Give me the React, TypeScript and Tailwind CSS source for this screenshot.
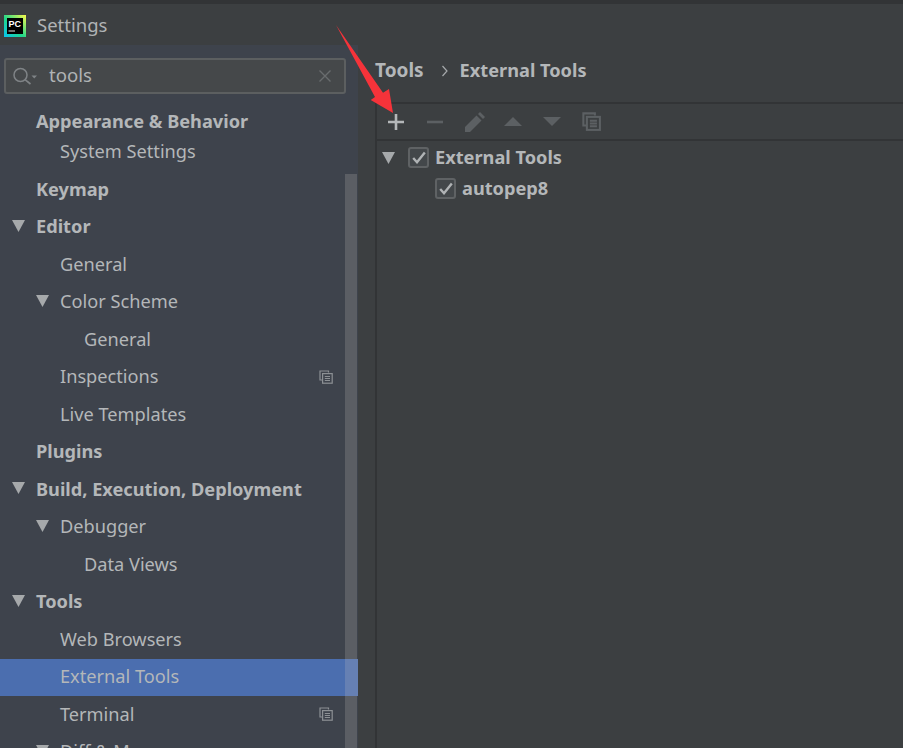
import React from "react";

const font = { fontFamily: '"Noto Sans", "Open Sans", sans-serif' };

function Tri() {
  return (
    <svg width="13" height="12" viewBox="0 0 13 12" className="block">
      <path d="M0 0H13L6.5 12Z" fill="#a6a9ab" />
    </svg>
  );
}

function CopyIcon({ size = 14, color = "#8c9094", sw = 1.2 }: { size?: number; color?: string; sw?: number }) {
  return (
    <svg width={size} height={size} viewBox="0 0 14 14" fill="none" stroke={color} strokeWidth={sw} className="block">
      <path d="M9.5 2.6V1H1v9h2" />
      <rect x="3.6" y="3.6" width="9.6" height="9.6" />
      <path d="M5.8 6.5h5.2M5.8 8.5h5.2M5.8 10.5h5.2" />
    </svg>
  );
}

function Check() {
  return (
    <span className="flex h-[21px] w-[21px] shrink-0 items-center justify-center rounded-[3px] border-2 border-[#5f6264] bg-[#43474a]">
      <svg width="14" height="13" viewBox="0 0 14 13" fill="none">
        <path d="M1.2 7l3.8 4.2L12.8 1.4" stroke="#b0b3b5" strokeWidth="2.4" />
      </svg>
    </span>
  );
}

type Row = { label: string; indent: number; bold?: boolean; arrow?: boolean; copy?: boolean; selected?: boolean; first?: boolean };

const rows: Row[] = [
  { label: "Appearance & Behavior", indent: 36, bold: true, first: true },
  { label: "System Settings", indent: 60 },
  { label: "Keymap", indent: 36, bold: true },
  { label: "Editor", indent: 36, bold: true, arrow: true },
  { label: "General", indent: 60 },
  { label: "Color Scheme", indent: 60, arrow: true },
  { label: "General", indent: 84 },
  { label: "Inspections", indent: 60, copy: true },
  { label: "Live Templates", indent: 60 },
  { label: "Plugins", indent: 36, bold: true },
  { label: "Build, Execution, Deployment", indent: 36, bold: true, arrow: true },
  { label: "Debugger", indent: 60, arrow: true },
  { label: "Data Views", indent: 84 },
  { label: "Tools", indent: 36, bold: true, arrow: true },
  { label: "Web Browsers", indent: 60 },
  { label: "External Tools", indent: 60, selected: true },
  { label: "Terminal", indent: 60, copy: true },
  { label: "Diff & Merge", indent: 60, arrow: true },
];

function TreeRow({ r }: { r: Row }) {
  return (
    <div
      className={`relative flex shrink-0 items-center ${r.first ? "h-[30.5px] pt-[6px]" : "h-[37.5px] pb-[2px]"} ${r.selected ? "bg-[#4b6eaf]" : ""} ${r.bold ? "font-bold" : ""}`}
      style={{ paddingLeft: r.indent }}
    >
      {r.arrow && (
        <span className="absolute top-[11px]" style={{ left: r.indent - 24 }}>
          <Tri />
        </span>
      )}
      <span className="whitespace-nowrap text-[18.2px] leading-none text-[#b4b7b9]">{r.label}</span>
      {r.copy && (
        <span className="absolute left-[319px] top-[11px]">
          <CopyIcon />
        </span>
      )}
    </div>
  );
}

export default function App() {
  return (
    <div className="relative flex h-[748px] w-[903px] flex-col overflow-hidden bg-[#3c3f41]" style={font}>
      <div className="h-[4px] shrink-0 bg-[#323436]" />
      <div className="flex h-[41px] shrink-0 items-center gap-[11px] bg-[#3c3f41] pl-[4px]">
        <svg width="22" height="22" viewBox="0 0 22 22" className="mt-[3px] block">
          <defs>
            <linearGradient id="pc" x1="0" y1="22" x2="22" y2="0" gradientUnits="userSpaceOnUse">
              <stop offset="0" stopColor="#07c3f2" />
              <stop offset="0.45" stopColor="#21d789" />
              <stop offset="1" stopColor="#fcf84a" />
            </linearGradient>
          </defs>
          <rect width="22" height="22" fill="url(#pc)" />
          <rect x="3" y="3" width="16" height="16" fill="#000" />
          <text x="4.5" y="11.5" fontSize="9" fontWeight="700" fill="#fff" fontFamily="Liberation Sans">PC</text>
          <rect x="4.5" y="15.5" width="6.5" height="1" fill="#ddd" />
        </svg>
        <span className="mt-[1px] text-[18.5px] leading-none text-[#b0b3b5]">Settings</span>
      </div>
      <div className="flex min-h-0 flex-1">
        <aside className="relative flex w-[358px] shrink-0 flex-col overflow-hidden bg-[#3e434c]">
          <div className="pb-[9px] pl-[4px] pt-[13px]">
            <div className="flex h-[36px] w-[342px] items-center rounded-[3px] border-2 border-[#5c5f60] bg-[#45484a] pl-[7px] pr-[13px]">
              <svg width="26" height="20" viewBox="0 0 26 20" fill="none" className="shrink-0">
                <circle cx="7.5" cy="9" r="6.5" stroke="#7f8386" strokeWidth="1.5" />
                <path d="M12.3 13.8L17.5 18" stroke="#7f8386" strokeWidth="1.7" />
                <path d="M18.5 9.5h5.5l-2.75 3z" fill="#7f8386" />
              </svg>
              <span className="mb-[1px] ml-[10px] flex-1 text-[18.6px] leading-none text-[#b0b3b5]">tools</span>
              <svg width="12" height="12" viewBox="0 0 12 12" fill="none" className="shrink-0">
                <path d="M0.5 0.5l11 11M11.5 0.5l-11 11" stroke="#696c6e" strokeWidth="1.4" />
              </svg>
            </div>
          </div>
          <div className="flex flex-col">
            {rows.map((r, i) => (
              <TreeRow key={i} r={r} />
            ))}
          </div>
          <div className="absolute bottom-0 left-[345px] top-[129px] w-[12px] bg-[#5b5e64]" />
          <div className="absolute left-[345px] top-[614px] h-[37px] w-[13px] bg-[#6680b3]" />
        </aside>
        <main className="flex min-w-0 flex-1 flex-col pl-[17px]">
          <div className="flex h-[57px] shrink-0 items-center pb-[6px]">
            <span className="text-[19px] font-bold leading-none text-[#b4b7b9]">Tools</span>
            <svg width="8" height="12" viewBox="0 0 8 12" fill="none" className="ml-[17px] mr-[11px]">
              <path d="M1.5 1l4.5 5-4.5 5" stroke="#a6a9ab" strokeWidth="1.2" />
            </svg>
            <span className="text-[18.2px] font-bold leading-none text-[#b4b7b9]">External Tools</span>
          </div>
          <div className="flex min-h-0 flex-1 flex-col border-l-2 border-t-2 border-[#323436]">
            <div className="flex h-[37px] shrink-0 items-center border-b-2 border-[#323436] pl-[11px]">
              <svg width="16" height="16" viewBox="0 0 16 16" className="shrink-0">
                <path d="M8 0v16M0 8h16" stroke="#b4b7b9" strokeWidth="2.6" />
              </svg>
              <svg width="16" height="16" viewBox="0 0 16 16" className="ml-[23px] shrink-0">
                <path d="M0 8h16" stroke="#5c6063" strokeWidth="2.6" />
              </svg>
              <svg width="20" height="20" viewBox="0 0 20 20" className="ml-[22px] shrink-0">
                <path d="M0 20v-5L11.5 3.5l5 5L5 20z" fill="#5c6063" />
                <path d="M13 2l2-2 5 5-2 2z" fill="#5c6063" />
              </svg>
              <svg width="18" height="9" viewBox="0 0 18 9" className="ml-[19px] shrink-0">
                <path d="M9 0l9 9H0z" fill="#5c6063" />
              </svg>
              <svg width="18" height="9" viewBox="0 0 18 9" className="ml-[21px] shrink-0">
                <path d="M9 9L0 0h18z" fill="#5c6063" />
              </svg>
              <span className="ml-[21px] shrink-0">
                <CopyIcon size={19} color="#5c6063" sw={1.5} />
              </span>
            </div>
            <div className="flex h-[33px] items-center pl-[5px]">
              <Tri />
              <span className="ml-[13px]">
                <Check />
              </span>
              <span className="ml-[6px] whitespace-nowrap text-[18.2px] font-bold leading-none text-[#b4b7b9]">External Tools</span>
            </div>
            <div className="flex h-[28px] items-center pl-[58px]">
              <Check />
              <span className="ml-[6px] whitespace-nowrap text-[18.2px] font-bold leading-none text-[#b4b7b9]">autopep8</span>
            </div>
          </div>
        </main>
      </div>
      <svg width="70" height="100" viewBox="0 0 70 100" className="pointer-events-none absolute left-[330px] top-[20px]">
        <path d="M6 5L53 72.7 59 69 63 93 40.7 80 45 77Z" fill="#f5333a" />
      </svg>
    </div>
  );
}
